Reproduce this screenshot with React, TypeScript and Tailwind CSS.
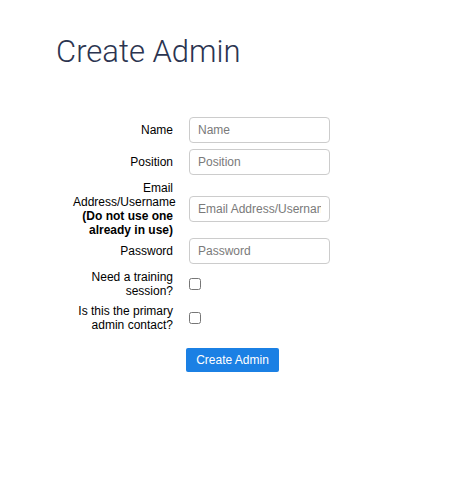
import React from "react";

const labelCls =
  "w-[100px] shrink-0 text-right text-[12px] leading-[14px] text-black";
const inputCls =
  "w-[141px] h-[26px] rounded-[4px] border border-[#cccccc] bg-white px-[8px] text-[12px] text-[#555] placeholder:text-[#7a7a7a] outline-none";

function Row({
  label,
  children,
  className = "",
}: {
  label: React.ReactNode;
  children: React.ReactNode;
  className?: string;
}) {
  return (
    <div className={`flex items-center gap-[16px] ${className}`}>
      <div className={labelCls}>{label}</div>
      {children}
    </div>
  );
}

export default function App() {
  return (
    <div
      className="w-[460px] h-[484px] bg-white"
      style={{ fontFamily: '"Liberation Sans", Arial, sans-serif' }}
    >
      <h1
        className="pl-[56px] pt-[32px] text-[31px] leading-[40px] font-light text-[#2b3450]"
        style={{ fontFamily: "Roboto, sans-serif" }}
      >
        Create Admin
      </h1>

      {/* form */}
      <div className="pl-[73px] pt-[45px] flex flex-col">
        <Row label="Name">
          <input className={inputCls} placeholder="Name" />
        </Row>
        <Row label="Position" className="mt-[6px]">
          <input className={inputCls} placeholder="Position" />
        </Row>
        <Row
          className="mt-[6px]"
          label={
            <>
              Email Address/Username{" "}
              <span className="font-bold">(Do not use one already in use)</span>
            </>
          }
        >
          <input className={inputCls} placeholder="Email Address/Username" />
        </Row>
        <Row label="Password" className="mt-[1px]">
          <input className={inputCls} type="password" placeholder="Password" />
        </Row>
        <Row label="Need a training session?" className="mt-[6px]">
          <input type="checkbox" className="m-0 w-[12px] h-[12px]" />
        </Row>
        <Row label="Is this the primary admin contact?" className="mt-[6px]">
          <input type="checkbox" className="m-0 w-[12px] h-[12px]" />
        </Row>
        <div className="mt-[15px] pl-[113px]">
          <button className="h-[24px] w-[93px] rounded-[2px] bg-[#1b80e4] text-[12px] text-white">
            Create Admin
          </button>
        </div>
      </div>
    </div>
  );
}
